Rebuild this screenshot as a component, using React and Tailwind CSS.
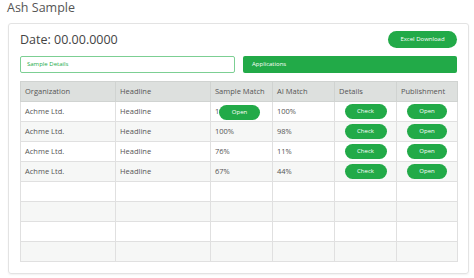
import React from 'react';

const rows = [
  { org: 'Achme Ltd.', head: 'Headline', sample: '100%', ai: '100%', overlay: true },
  { org: 'Achme Ltd.', head: 'Headline', sample: '100%', ai: '98%' },
  { org: 'Achme Ltd.', head: 'Headline', sample: '76%', ai: '11%' },
  { org: 'Achme Ltd.', head: 'Headline', sample: '67%', ai: '44%' },
  null,
  null,
  null,
  null,
];

const GreenPill = ({ children, className = '' }) => (
  <span
    className={`inline-flex items-center justify-center rounded-full bg-[#22aa48] text-white text-[6px] h-[15px] ${className}`}
  >
    {children}
  </span>
);

const App = () => {
  return (
    <div className="w-[474px] h-[278px] bg-white text-[#555] font-['Open_Sans',sans-serif] overflow-hidden">
      <h1 className="pl-[7px] pt-[1px] h-[23px] text-[12.5px] leading-[14px] text-[#555]">Ash Sample</h1>

      <div className="ml-[8px] w-[461px] h-[251px] border border-[#e3e3e3] rounded-[3px] shadow-[0_1px_2px_rgba(0,0,0,0.06)] px-[11px]">
        <div className="flex items-center justify-between h-[32px] pb-[1px]">
          <div className="text-[12.5px] text-[#444] leading-[16px]">Date: 00.00.0000</div>
          <GreenPill className="w-[69px] h-[17px]">Excel Download</GreenPill>
        </div>

        <div className="flex gap-[8px] h-[17px]">
          <div className="w-[215px] h-[17px] border border-[#7ccf93] rounded-[2px] text-[#22aa48] text-[6px] flex items-center pl-[6px]">
            Sample Details
          </div>
          <div className="flex-1 h-[17px] bg-[#22aa48] rounded-[2px] text-white text-[6px] flex items-center pl-[9px]">
            Applications
          </div>
        </div>

        <table className="mt-[8px] w-[437px] border-collapse table-fixed text-[7.5px] text-[#555]">
          <colgroup>
            <col className="w-[95px]" />
            <col className="w-[95px]" />
            <col className="w-[62px]" />
            <col className="w-[62px]" />
            <col className="w-[62px]" />
            <col className="w-[61px]" />
          </colgroup>
          <thead>
            <tr className="bg-[#dde0de] h-[20px]">
              {['Organization', 'Headline', 'Sample Match', 'AI Match', 'Details', 'Publishment'].map((h) => (
                <th key={h} className="border border-[#d0d3d1] text-left font-normal pl-[4px]">
                  {h}
                </th>
              ))}
            </tr>
          </thead>
          <tbody>
            {rows.map((r, i) => (
              <tr key={i} className={`h-[20px] ${i % 2 === 1 ? 'bg-[#f6f7f6]' : 'bg-white'}`}>
                <td className="border border-[#e0e0e0] pl-[4px]">{r ? r.org : ''}</td>
                <td className="border border-[#e0e0e0] pl-[4px]">{r ? r.head : ''}</td>
                <td className="border border-[#e0e0e0] pl-[4px] relative">
                  {r ? r.sample : ''}
                  {r && r.overlay && (
                    <GreenPill className="absolute left-[8px] top-[3px] w-[41px] h-[14px]">Open</GreenPill>
                  )}
                </td>
                <td className="border border-[#e0e0e0] pl-[4px]">{r ? r.ai : ''}</td>
                <td className="border border-[#e0e0e0] text-center">
                  {r && <GreenPill className="w-[42px]">Check</GreenPill>}
                </td>
                <td className="border border-[#e0e0e0] text-center">
                  {r && <GreenPill className="w-[40px]">Open</GreenPill>}
                </td>
              </tr>
            ))}
          </tbody>
        </table>
      </div>
    </div>
  );
};

export default App;
